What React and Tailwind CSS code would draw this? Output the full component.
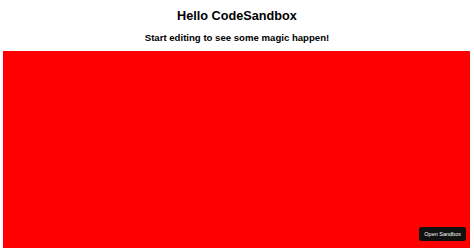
export default function App() {
  return (
    <div className="w-[474px] h-[248px] overflow-hidden bg-white flex flex-col items-center" style={{ fontFamily: '"Liberation Sans", Arial, sans-serif' }}>
      <h1 className="mt-[8px] text-[12.7px] leading-[16px] font-bold text-black">Hello CodeSandbox</h1>
      <h2 className="mt-[8px] text-[9.6px] leading-[12px] font-bold text-black">Start editing to see some magic happen!</h2>
      <div className="mt-[7px] w-[467px] flex-1 bg-[#ff0000] relative self-start ml-[3px]">
        <div className="absolute right-[4px] bottom-[7px] bg-[#111] text-white text-[5.5px] leading-[14px] px-[5px] rounded-[2px]">Open Sandbox</div>
      </div>
    </div>
  );
}
